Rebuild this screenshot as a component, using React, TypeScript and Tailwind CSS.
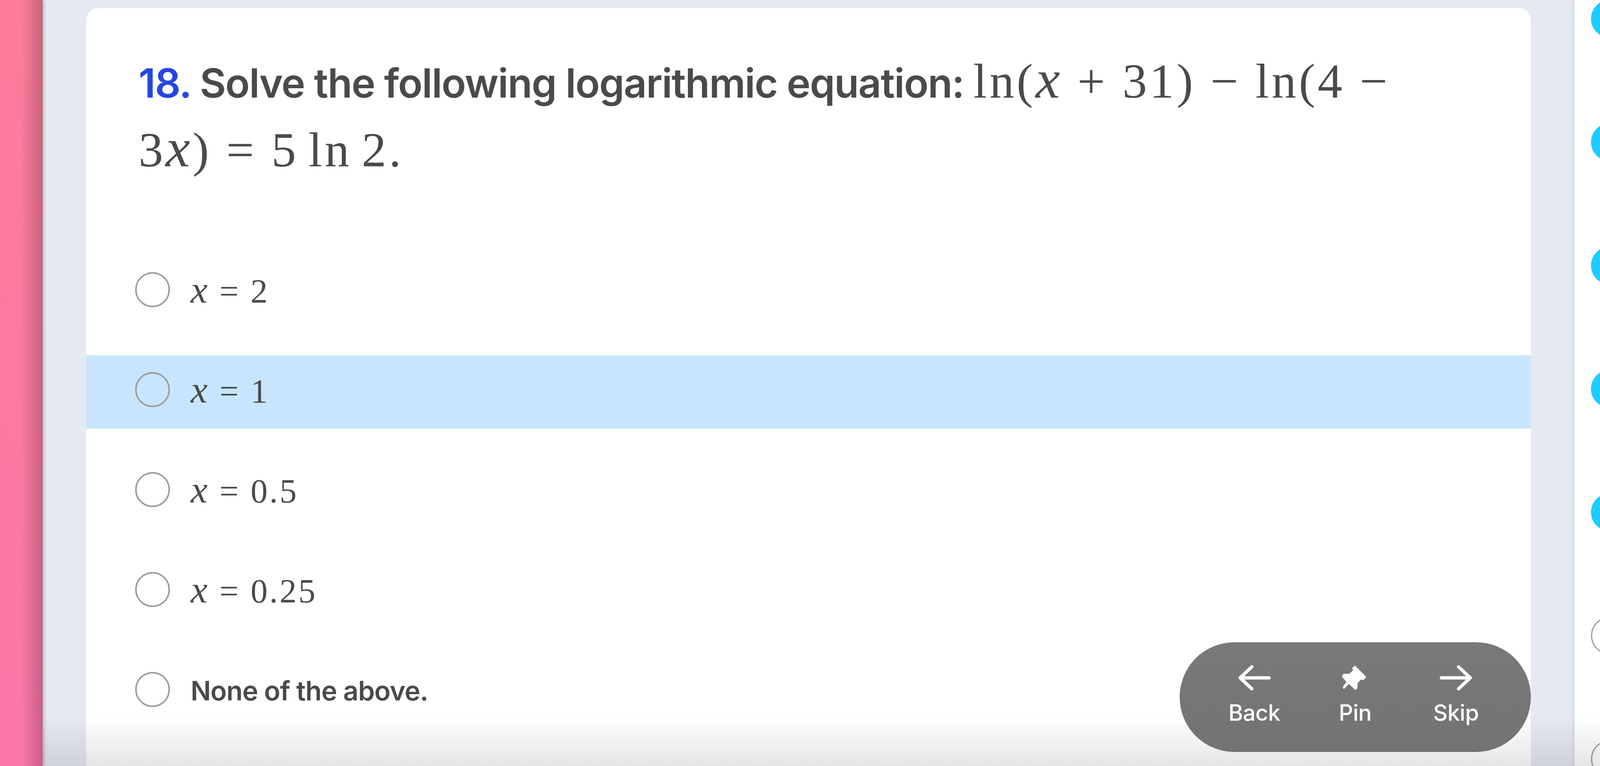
import React from 'react'

interface OptionRow {
  id: string
  label: React.ReactNode
  math?: boolean
  selected?: boolean
}

const MathX = () => <i className="text-[1.12em]">x</i>

const options: OptionRow[] = [
  { id: 'a', math: true, label: <><MathX /> = 2</> },
  { id: 'b', math: true, selected: true, label: <><MathX /> = 1</> },
  { id: 'c', math: true, label: <><MathX /> = 0.5</> },
  { id: 'd', math: true, label: <><MathX /> = 0.25</> },
  { id: 'e', label: 'None of the above.' },
]

const ArrowLeft = () => (
  <svg viewBox="0 0 120 100" className="w-[2.749vw]" fill="none" stroke="white" strokeWidth="9" strokeLinecap="round" strokeLinejoin="round">
    <path d="M100 46H21M53 16L21 46L53 76" />
  </svg>
)

const ArrowRight = () => (
  <svg viewBox="0 0 120 100" className="w-[2.749vw]" fill="none" stroke="white" strokeWidth="9" strokeLinecap="round" strokeLinejoin="round">
    <path d="M20 46H99M67 16L99 46L67 76" />
  </svg>
)

const PinIcon = () => (
  <svg viewBox="0 0 120 100" className="w-[2.749vw]" fill="white" stroke="white" strokeWidth="4" strokeLinejoin="round">
    <path d="M59 15L88 44L82 50L76 48L65 59L64 73L61 77L43 60L29 74L29 70L39 57L26 43L29 37L45 37L57 25L54 20Z" />
  </svg>
)

const actions = [
  { id: 'back', icon: <ArrowLeft />, label: 'Back' },
  { id: 'pin', icon: <PinIcon />, label: 'Pin' },
  { id: 'skip', icon: <ArrowRight />, label: 'Skip' },
]

// widths and type are in vw so the page keeps its proportions if the window comes out narrower than asked
export default function App() {
  return (
    <div className="relative flex h-screen w-screen overflow-hidden bg-white font-['Inter',sans-serif]">
      {/* Pink rail */}
      <aside className="relative z-10 w-[2.657vw] shrink-0 bg-linear-to-b from-[#fd7c98] to-[#fb76a8] shadow-[3px_0_8px_rgba(0,0,0,0.25)]">
        <div className="h-full w-full bg-linear-to-r from-transparent via-transparent to-black/20" />
      </aside>

      {/* Question area */}
      <main className="min-w-0 flex-1 bg-[#e5e9f2] px-[2.749vw] pt-[21px] shadow-[inset_-8px_0_10px_-6px_rgba(0,0,0,0.1)]">
        <section className="relative h-[2000px] rounded-[30px] bg-white">
          <h1 className="pt-[99px] pr-[5.498vw] pl-[3.253vw] text-[2.52vw] leading-[166px] font-semibold tracking-[-0.018em] text-[#4a4a4a]">
            <span className="text-[#2546e0]">18.</span> Solve the following logarithmic equation:{' '}
            <span className="font-['Liberation_Serif',serif] text-[3.07vw] font-normal tracking-[0.052em]">
              ln(<MathX /> + 31) − ln(4 − 3<MathX />) = <span className="[word-spacing:-0.1em]">5 ln 2.</span>
            </span>
          </h1>

          <ul className="mt-[182px] flex flex-col gap-[68px]">
            {options.map((option) => (
              <li
                key={option.id}
                className={`flex h-[188px] items-center pl-[3.047vw] text-[#4a4a4a] ${option.selected ? 'bg-[#c7e6fd]' : ''}`}
              >
                <span className="mb-[12px] h-[2.176vw] w-[2.176vw] shrink-0 rounded-full border-[4px] border-[#9b9b9b]" />
                {option.math ? (
                  <span className="mb-[12px] ml-[1.283vw] font-['Liberation_Serif',serif] text-[2.13vw] tracking-[0.05em]">{option.label}</span>
                ) : (
                  <span className="mb-[3px] ml-[1.283vw] text-[1.672vw] font-semibold tracking-[-0.015em]">{option.label}</span>
                )}
              </li>
            ))}
          </ul>

          {/* Floating actions */}
          <div className="absolute top-[1624px] right-0 z-20 flex h-[281px] w-[21.947vw] justify-center rounded-[140px] bg-linear-to-b from-[#797979] to-[#737373] pt-[45px] text-white">
            {actions.map((action) => (
              <div key={action.id} className="flex w-[6.3vw] flex-col items-center">
                <div className="flex h-[100px] items-center">{action.icon}</div>
                <span className="text-[1.397vw] leading-[72px] font-medium tracking-[-0.01em]">{action.label}</span>
              </div>
            ))}
          </div>
        </section>
      </main>

      {/* Question navigator, cut off by the window */}
      <div className="-mt-[110px] flex w-[1.581vw] shrink-0 flex-col overflow-hidden pl-[1.008vw]">
        {[0, 1, 2, 3, 4].map((n) => (
          <div key={n} className="flex h-[316px] shrink-0 items-center">
            <span className="h-[2.337vw] w-[2.337vw] shrink-0 rounded-full bg-[#1ecbff]" />
          </div>
        ))}
        {[5, 6].map((n) => (
          <div key={n} className="flex h-[316px] shrink-0 items-center">
            <span className="h-[2.337vw] w-[2.337vw] shrink-0 rounded-full border-[3px] border-[#9b9b9b]" />
          </div>
        ))}
      </div>

      {/* Fade along the bottom edge */}
      <div className="absolute right-0 bottom-0 left-[2.657vw] z-10 h-[130px] bg-linear-to-b from-transparent to-black/10" />
    </div>
  )
}
